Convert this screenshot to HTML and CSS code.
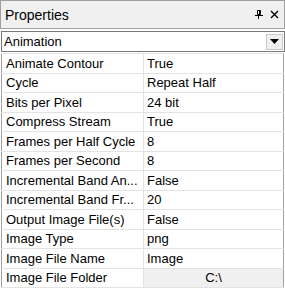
FILE: index.html
```html
<!DOCTYPE html>
<html lang="en">
<head>
  <meta charset="UTF-8">
  <title>Properties</title>
  <link rel="stylesheet" href="styles.css">
</head>
<body>

<div class="panel">
  <div class="titlebar">
    <span class="title">Properties</span>
    <span class="tools">
      <!-- pin -->
      <svg width="8" height="9" viewBox="0 0 8 9">
        <path d="M2.5 0.5h3v4h-3z M4.5 0.5v4 M0 5.5h8 M3.5 5.5v3.5" fill="none" stroke="#000" stroke-width="1"/>
      </svg>
      <!-- close -->
      <svg width="9" height="9" viewBox="0 0 9 9">
        <path d="M1 1l7 7 M8 1l-7 7" stroke="#000" stroke-width="1.4"/>
      </svg>
    </span>
  </div>

  <div class="combo">
    <span class="combo-text">Animation</span>
    <span class="combo-btn">
      <svg width="9" height="5" viewBox="0 0 9 5"><path d="M0 0h9l-4.5 5z" fill="#000"/></svg>
    </span>
  </div>

  <table class="grid">
    <tbody>
      <tr><td>Animate Contour</td><td>True</td></tr>
      <tr><td>Cycle</td><td>Repeat Half</td></tr>
      <tr><td>Bits per Pixel</td><td>24 bit</td></tr>
      <tr><td>Compress Stream</td><td>True</td></tr>
      <tr><td>Frames per Half Cycle</td><td>8</td></tr>
      <tr><td>Frames per Second</td><td>8</td></tr>
      <tr><td>Incremental Band An...</td><td>False</td></tr>
      <tr><td>Incremental Band Fr...</td><td>20</td></tr>
      <tr><td>Output Image File(s)</td><td>False</td></tr>
      <tr><td>Image Type</td><td>png</td></tr>
      <tr><td>Image File Name</td><td>Image</td></tr>
      <tr class="selected"><td>Image File Folder</td><td class="folder">C:\</td></tr>
    </tbody>
  </table>
</div>

</body>
</html>
```

FILE: styles.css
```css
body {
  margin: 0;
  background: #fff;
  font-family: "Liberation Sans", Arial, sans-serif;
  color: #000;
}
.panel {
  width: 285px;
  height: 296px;
  overflow: hidden;
}
.titlebar {
  height: 27px;
  display: flex;
  align-items: center;
  justify-content: space-between;
  background: #f0f0f0;
  border: 1px solid #a0a0a0;
  padding: 0 4px 0 4px;
}
.title {
  font-size: 14px;
}
.tools {
  display: flex;
  align-items: center;
  gap: 7px;
  padding-right: 1px;
}
.tools svg {
  display: block;
}
.combo {
  margin: 2px 0 0 1px;
  height: 19px;
  border: 1px solid #7a7a7a;
  display: flex;
  align-items: center;
  justify-content: space-between;
}
.combo-text {
  font-size: 13px;
  padding-left: 2px;
}
.combo-btn {
  width: 17px;
  height: 16px;
  margin-right: 1px;
  background: #f0f0f0;
  border: 1px solid #c8c8c8;
  box-sizing: border-box;
  display: flex;
  align-items: center;
  justify-content: center;
}
.grid {
  margin: 1px 0 0 1px;
  width: 283px;
  border-collapse: collapse;
  border-left: 1px solid #a0a0a0;
  border-right: 1px solid #a0a0a0;
  table-layout: fixed;
  font-size: 13px;
}
.grid td {
  height: 18.5px;
  padding: 0 0 0 4px;
  border-top: 1px solid #e3e3e3;
  border-bottom: 1px solid #e3e3e3;
  white-space: nowrap;
  overflow: hidden;
}
.grid td:first-child {
  width: 137px;
  border-right: 1px solid #e3e3e3;
}
.grid td + td {
  padding-left: 3px;
}
.grid .folder {
  background: #f0f0f0;
  text-align: center;
  padding-left: 0;
}
```
